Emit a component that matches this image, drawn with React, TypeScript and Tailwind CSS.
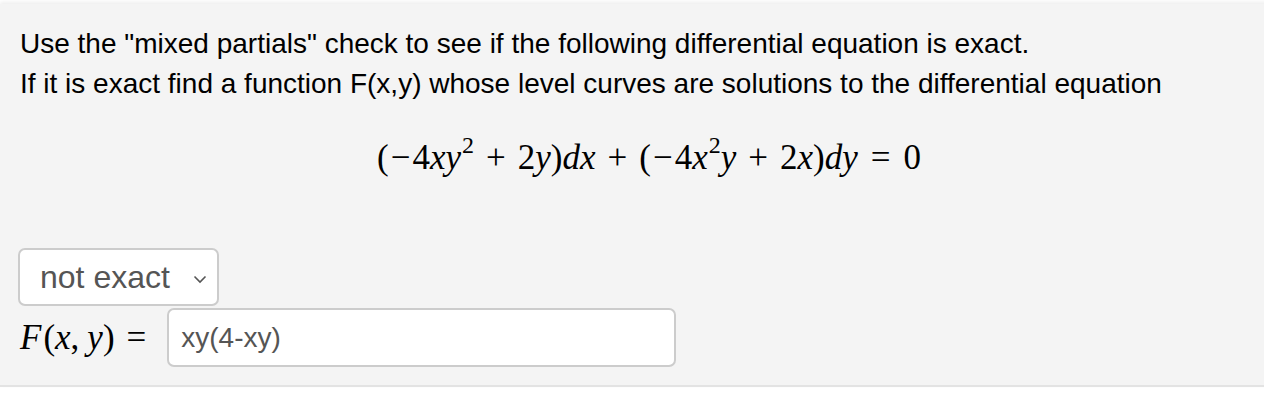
import React from "react";

const serif = { fontFamily: '"Liberation Serif", "DejaVu Serif", serif' };

function Op({ c, w }: { c: string; w: string }) {
  return <span className={w}>{c}</span>;
}

function Sup({ c }: { c: string }) {
  return <span className="inline-block text-[24px] leading-none relative top-[-13px] ml-[1px]">{c}</span>;
}

export default function App() {
  return (
    <div className="w-[1264px] h-[400px] bg-white overflow-hidden" style={{ fontFamily: '"Liberation Sans", Arial, sans-serif' }}>
      <div className="mt-[4px] w-[1300px] bg-[#f4f4f4] border-b-2 border-[#e3e3e3] shadow-[0_-2px_4px_rgba(0,0,0,0.07)] pt-[20px] pb-[18px] pl-[20px] pr-[20px]">
        <div className="text-[28px] leading-[40px] text-black">
          <div>Use the "mixed partials" check to see if the following differential equation is exact.</div>
          <div>If it is exact find a function F(x,y) whose level curves are solutions to the differential equation</div>
        </div>

        <div className="mt-[34px] h-[40px] flex items-center justify-center pr-[2px] text-[35px] leading-[40px] text-black" style={serif}>
          <span>(</span>
          <Op c="−" w="mx-[2px]" />
          <span>4</span>
          <i>x</i>
          <i>y</i>
          <Sup c="2" />
          <Op c="+" w="mx-[12px]" />
          <span>2</span>
          <i>y</i>
          <span>)</span>
          <i>dx</i>
          <Op c="+" w="mx-[12px]" />
          <span>(</span>
          <Op c="−" w="mx-[2px]" />
          <span>4</span>
          <i>x</i>
          <Sup c="2" />
          <i>y</i>
          <Op c="+" w="mx-[12px]" />
          <span>2</span>
          <i>x</i>
          <span>)</span>
          <i>dy</i>
          <Op c="=" w="mx-[13px]" />
          <span>0</span>
        </div>

        <div className="mt-[70px] ml-[-2px] w-[201px] h-[58px] bg-white border-2 border-[#cccccc] rounded-[7px] flex items-center pl-[20px] pr-[10px] text-[32px] text-[#555555]">
          <span className="flex-1 leading-none">not exact</span>
          <svg width="14" height="9" viewBox="0 0 14 9" className="shrink-0 mt-[4px] block w-[14px] h-[9px]">
            <path d="M1.5 1.5 L7 7 L12.5 1.5" fill="none" stroke="#555" strokeWidth="1.6" />
          </svg>
        </div>

        <div className="mt-[2px] flex items-center">
          <div className="text-[35px] leading-[40px] text-black flex items-center" style={serif}>
            <i>F</i>
            <span className="ml-[2px]">(</span>
            <i>x</i>
            <span className="mr-[8px]">,</span>
            <i>y</i>
            <span>)</span>
            <span className="ml-[12px]">=</span>
          </div>
          <div className="ml-[21px] w-[509px] h-[59px] bg-white border-2 border-[#cccccc] rounded-[7px] flex items-center pl-[12px] text-[28px] text-[#555555]">
            xy(4-xy)
          </div>
        </div>
      </div>
    </div>
  );
}
